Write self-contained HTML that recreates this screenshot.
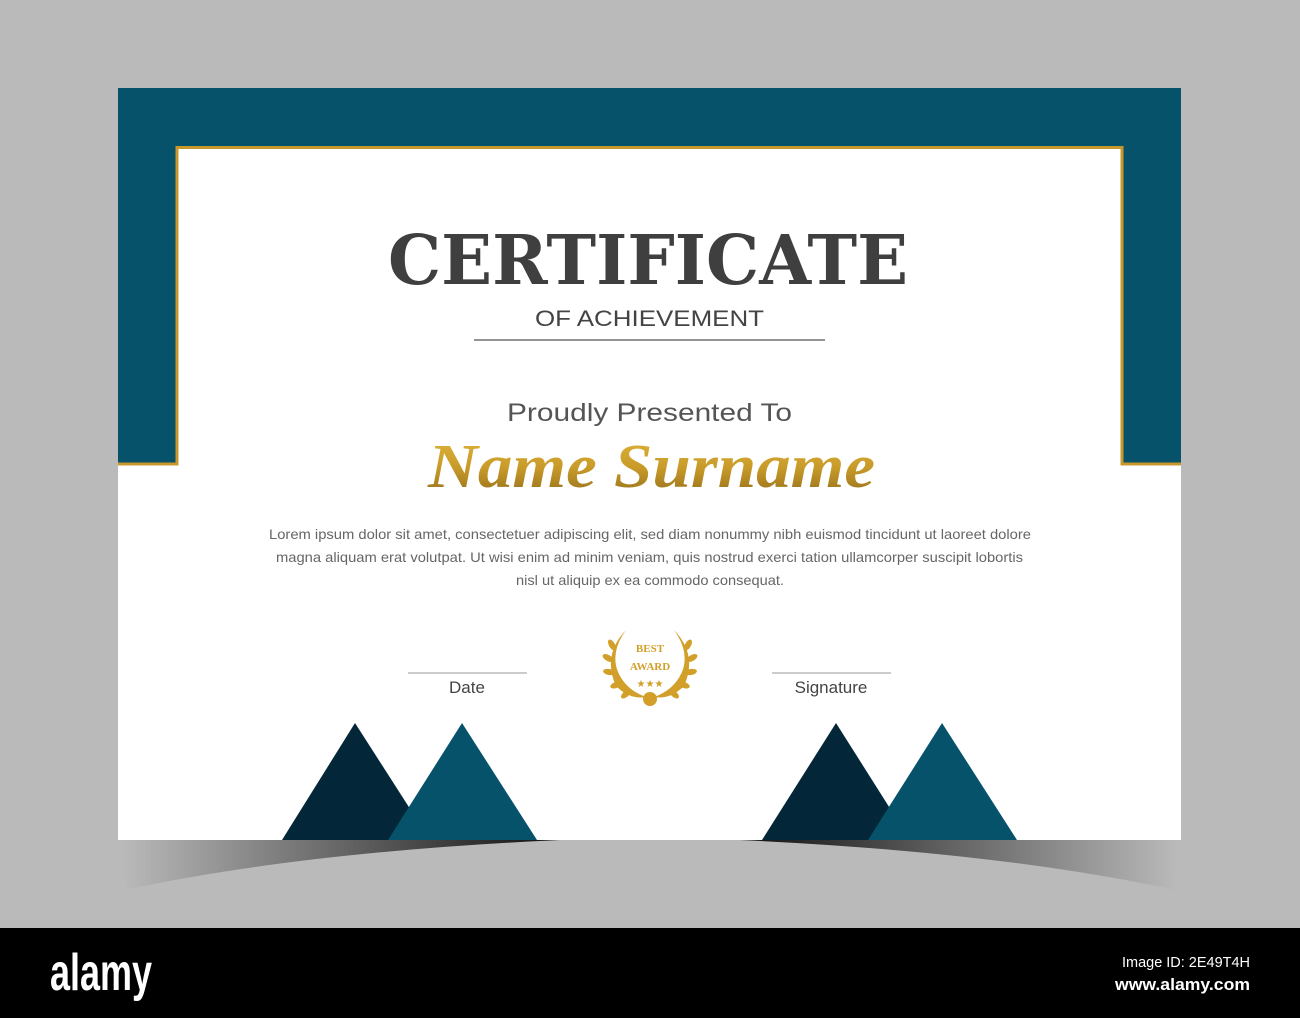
<!DOCTYPE html>
<html><head><meta charset="utf-8"><style>
html,body{margin:0;padding:0;width:1300px;height:1018px;overflow:hidden;background:#bababa}
svg{display:block}
</style></head><body>
<svg width="1300" height="1018" viewBox="0 0 1300 1018" xmlns="http://www.w3.org/2000/svg">
<defs>
<linearGradient id="gold" x1="0" y1="0" x2="0" y2="1">
<stop offset="0" stop-color="#e2b53a"/><stop offset="0.5" stop-color="#c99b2a"/><stop offset="1" stop-color="#8e6a1a"/>
</linearGradient>
<linearGradient id="shL" x1="0" y1="0" x2="1" y2="0">
<stop offset="0" stop-color="#bababa"/><stop offset="0.6" stop-color="#555"/><stop offset="1" stop-color="#111"/>
</linearGradient>
<linearGradient id="shR" x1="1" y1="0" x2="0" y2="0">
<stop offset="0" stop-color="#bababa"/><stop offset="0.6" stop-color="#555"/><stop offset="1" stop-color="#111"/>
</linearGradient>
</defs>
<rect width="1300" height="928" fill="#bababa"/>
<path d="M122 840 L560 840 Q300 852 125 890 Z" fill="url(#shL)"/>
<path d="M1178 840 L740 840 Q1000 852 1175 890 Z" fill="url(#shR)"/>
<rect x="118" y="88" width="1063" height="752" fill="#fff"/>
<rect x="118" y="88" width="1063" height="377" fill="#06526a"/>
<rect x="176" y="147" width="947" height="320" fill="#fff"/>
<path d="M118 464 L177 464 L177 147.5 L1122 147.5 L1122 464 L1181 464" fill="none" stroke="#c9982c" stroke-width="3"/>
<polygon points="355,723 282,840 430,840" fill="#032638"/>
<polygon points="462,723 388,840 537,840" fill="#06526a"/>
<polygon points="836,723 762,840 910,840" fill="#032638"/>
<polygon points="942,723 868,840 1017,840" fill="#06526a"/>
<text x="388" y="284" textLength="520" lengthAdjust="spacingAndGlyphs" font-family="'DejaVu Serif','Liberation Serif',serif" font-weight="bold" font-size="68" fill="#3f3f3f">CERTIFICATE</text>
<text x="535" y="326" textLength="229" lengthAdjust="spacingAndGlyphs" font-family="'Liberation Sans',sans-serif" font-size="22" fill="#444">OF ACHIEVEMENT</text>
<line x1="474" y1="340" x2="825" y2="340" stroke="#555" stroke-width="1.2"/>
<text x="507" y="421" textLength="285" lengthAdjust="spacingAndGlyphs" font-family="'Liberation Sans',sans-serif" font-size="25" fill="#555">Proudly Presented To</text>
<text x="428" y="487" textLength="447" lengthAdjust="spacingAndGlyphs" font-family="'Liberation Serif',serif" font-style="italic" font-weight="bold" font-size="62" fill="url(#gold)">Name Surname</text>
<g font-family="'Liberation Sans',sans-serif" font-size="14" fill="#666">
<text x="269" y="539" textLength="762" lengthAdjust="spacingAndGlyphs">Lorem ipsum dolor sit amet, consectetuer adipiscing elit, sed diam nonummy nibh euismod tincidunt ut laoreet dolore</text>
<text x="276" y="562" textLength="747" lengthAdjust="spacingAndGlyphs">magna aliquam erat volutpat. Ut wisi enim ad minim veniam, quis nostrud exerci tation ullamcorper suscipit lobortis</text>
<text x="516" y="585" textLength="268" lengthAdjust="spacingAndGlyphs">nisl ut aliquip ex ea commodo consequat.</text>
</g>
<line x1="408" y1="673" x2="527" y2="673" stroke="#999" stroke-width="1"/>
<line x1="772" y1="673" x2="891" y2="673" stroke="#999" stroke-width="1"/>
<text x="467" y="693" text-anchor="middle" font-family="'Liberation Sans',sans-serif" font-size="17" fill="#444">Date</text>
<text x="831" y="693" text-anchor="middle" font-family="'Liberation Sans',sans-serif" font-size="17" fill="#444">Signature</text>
<g fill="#d2a02a">
<path d="M626 630 Q602 655 616 686 Q630 700 646 697 Q626 690 618 672 Q610 652 626 630 Z"/>
<path d="M674 630 Q698 655 684 686 Q670 700 654 697 Q674 690 682 672 Q690 652 674 630 Z"/>
<ellipse cx="612" cy="645" rx="3" ry="6" transform="rotate(-30 612 645)"/>
<ellipse cx="608" cy="658" rx="3" ry="6" transform="rotate(-60 608 658)"/>
<ellipse cx="609" cy="672" rx="3" ry="6" transform="rotate(-80 609 672)"/>
<ellipse cx="616" cy="685" rx="3" ry="6" transform="rotate(-110 616 685)"/>
<ellipse cx="626" cy="694" rx="3" ry="6" transform="rotate(-130 626 694)"/>
<ellipse cx="688" cy="645" rx="3" ry="6" transform="rotate(30 688 645)"/>
<ellipse cx="692" cy="658" rx="3" ry="6" transform="rotate(60 692 658)"/>
<ellipse cx="691" cy="672" rx="3" ry="6" transform="rotate(80 691 672)"/>
<ellipse cx="684" cy="685" rx="3" ry="6" transform="rotate(110 684 685)"/>
<ellipse cx="674" cy="694" rx="3" ry="6" transform="rotate(130 674 694)"/>
<circle cx="650" cy="699" r="7"/>
<text x="650" y="652" text-anchor="middle" font-family="'Liberation Serif',serif" font-weight="bold" font-size="11">BEST</text>
<text x="650" y="670" text-anchor="middle" font-family="'Liberation Serif',serif" font-weight="bold" font-size="11">AWARD</text>
<text x="650" y="687" text-anchor="middle" font-family="'DejaVu Sans',sans-serif" font-size="10">★★★</text>
</g>
<rect x="0" y="928" width="1300" height="90" fill="#000"/>
<text x="50" y="990" textLength="102" lengthAdjust="spacingAndGlyphs" font-family="'Liberation Sans',sans-serif" font-weight="bold" font-size="52" fill="#fff">alamy</text>
<text x="1250" y="967" text-anchor="end" textLength="128" lengthAdjust="spacingAndGlyphs" font-family="'Liberation Sans',sans-serif" font-size="15" fill="#fff">Image ID: 2E49T4H</text>
<text x="1250" y="990" text-anchor="end" textLength="135" lengthAdjust="spacingAndGlyphs" font-family="'Liberation Sans',sans-serif" font-weight="bold" font-size="17" fill="#fff">www.alamy.com</text>
</svg>
</body></html>
